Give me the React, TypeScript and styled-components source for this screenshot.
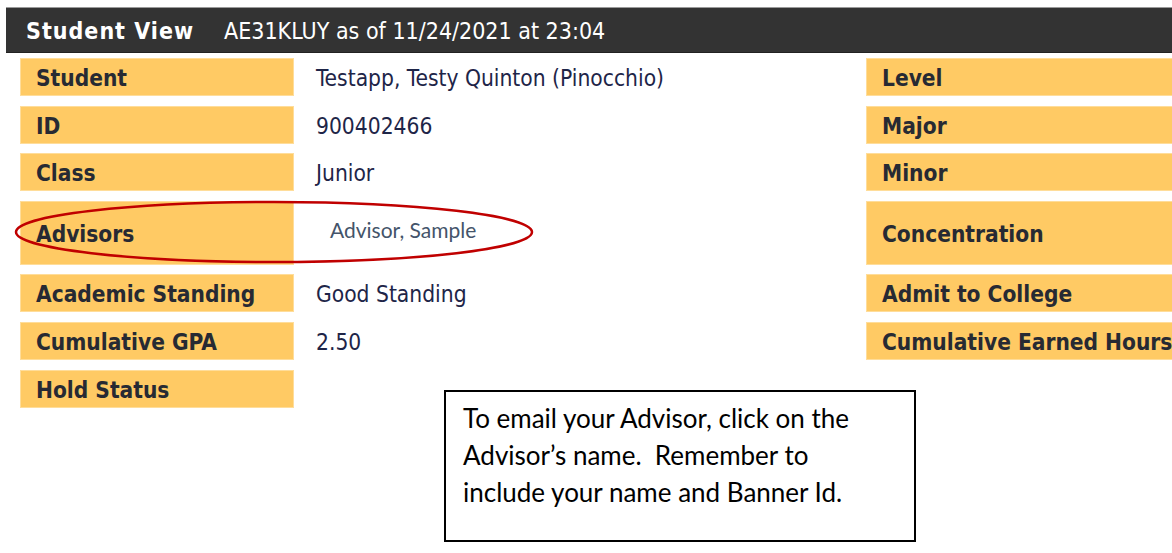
import React from "react";
import styled, { createGlobalStyle } from "styled-components";

// Style

const GlobalStyle = createGlobalStyle`
  html, body {
    margin: 0;
    padding: 0;
    background: #ffffff;
    overflow: hidden;
  }
  body {
    font-family: "DejaVu Sans Condensed", "DejaVu Sans", sans-serif;
    font-stretch: condensed;
  }
`;

const Page = styled.div`
  width: 1172px;
  height: 553px;
  padding: 7px 0 0 6px;
  box-sizing: border-box;
  overflow: hidden;
`;

const Header = styled.div`
  height: 46px;
  background-color: #333333;
  border-top: 1px solid #9a9a9a;
  border-bottom: 1px solid #222222;
  box-sizing: border-box;
  display: flex;
  flex-direction: row;
  align-items: center;
  padding: 2px 0 0 20px;
  color: #ffffff;
  font-size: 23px;
  white-space: nowrap;
`;

const HeaderTitle = styled.span`
  font-weight: bold;
  letter-spacing: 1px;
  margin-right: 30px;
`;

const HeaderInfo = styled.span`
  font-weight: normal;
`;

const Grid = styled.div`
  position: relative;
  margin: 5px 0 0 14px;
  display: grid;
  grid-template-columns: 274px 572px 330px;
  grid-template-rows: 38px 38px 38px 64px 38px 38px 38px auto;
  row-gap: 9.6px;
`;

const Label = styled.div<{ $col?: number }>`
  grid-column: ${(p) => p.$col ?? 1};
  background-color: #ffca64;
  border: 1px solid #ffdd9a;
  box-sizing: border-box;
  display: flex;
  align-items: center;
  padding: 2px 0 0 15px;
  font-weight: bold;
  font-size: 22.5px;
  color: #272a33;
  white-space: nowrap;
  overflow: hidden;
`;

const Value = styled.div`
  grid-column: 2;
  display: flex;
  align-items: center;
  padding: 2px 0 0 22px;
  font-size: 22.6px;
  color: #1e2548;
  white-space: nowrap;
`;

const AdvisorLink = styled.span`
  font-family: Lato, "Open Sans", sans-serif;
  font-stretch: normal;
  font-size: 21px;
  color: #44546a;
  padding-left: 14px;
  padding-bottom: 8px;
`;

const Ellipse = styled.svg`
  position: absolute;
  left: -6px;
  top: 141px;
  pointer-events: none;
`;

const NoteBox = styled.div`
  grid-column: 2;
  grid-row: 7 / span 2;
  margin: 20px 0 0 150px;
  width: 472px;
  height: 152px;
  border: 2px solid #000000;
  box-sizing: border-box;
  padding: 8px 17px;
  font-family: Lato, "Open Sans", sans-serif;
  font-stretch: normal;
  font-size: 26px;
  line-height: 37px;
  color: #000000;
`;

// render

const rows: { left: string; value?: React.ReactNode; right?: string }[] = [
  { left: "Student", value: "Testapp, Testy Quinton (Pinocchio)", right: "Level" },
  { left: "ID", value: "900402466", right: "Major" },
  { left: "Class", value: "Junior", right: "Minor" },
  { left: "Advisors", value: <AdvisorLink>Advisor, Sample</AdvisorLink>, right: "Concentration" },
  { left: "Academic Standing", value: "Good Standing", right: "Admit to College" },
  { left: "Cumulative GPA", value: "2.50", right: "Cumulative Earned Hours" },
  { left: "Hold Status" },
];

export default function App() {
  return (
    <>
      <GlobalStyle />
      <Page>
        <Header>
          <HeaderTitle>Student View</HeaderTitle>
          <HeaderInfo>AE31KLUY as of 11/24/2021 at 23:04</HeaderInfo>
        </Header>
        <Grid>
          {rows.map((r) => (
            <React.Fragment key={r.left}>
              <Label>{r.left}</Label>
              <Value>{r.value}</Value>
              {r.right ? <Label $col={3}>{r.right}</Label> : <div />}
            </React.Fragment>
          ))}
          <NoteBox>
            To email your Advisor, click on the Advisor’s name.&nbsp; Remember to include your name and Banner Id.
          </NoteBox>
          <Ellipse width="522" height="66" viewBox="0 0 522 66">
            <ellipse cx="260" cy="33" rx="258" ry="30" fill="none" stroke="#c00000" strokeWidth="2.5" />
          </Ellipse>
        </Grid>
      </Page>
    </>
  );
}
